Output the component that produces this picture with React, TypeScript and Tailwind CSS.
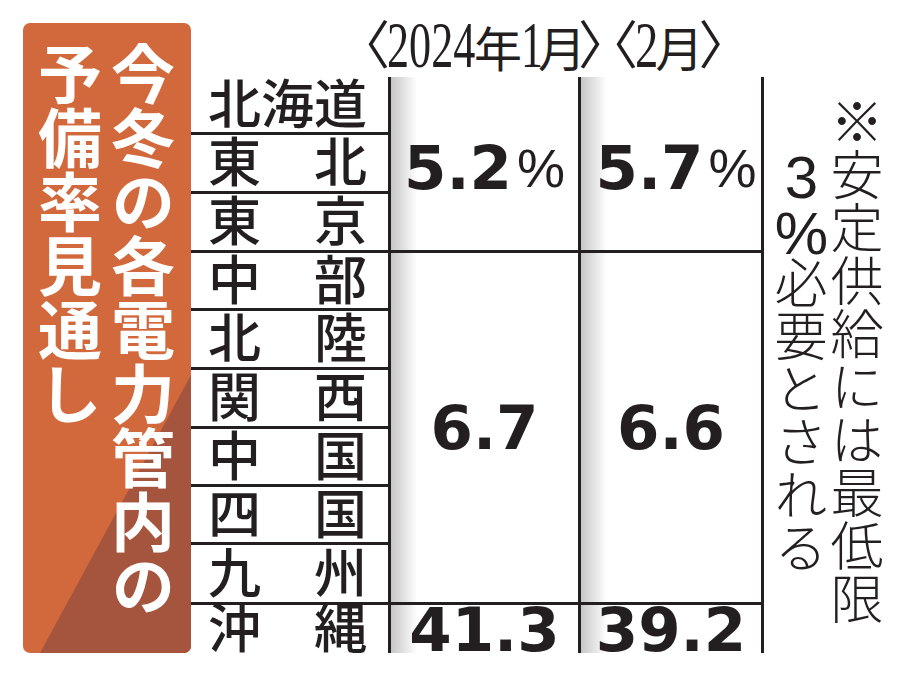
const rows = [
  { a: '北海道', b: '', h: 'h-[55px]' },
  { a: '東', b: '北', h: 'h-[59px] border-t-[3px]' },
  { a: '東', b: '京', h: 'h-[59px] border-t-[3px]' },
  { a: '中', b: '部', h: 'h-[58px] border-t-[3px]' },
  { a: '北', b: '陸', h: 'h-[59px] border-t-[3px]' },
  { a: '関', b: '西', h: 'h-[59px] border-t-[3px]' },
  { a: '中', b: '国', h: 'h-[58px] border-t-[3px]' },
  { a: '四', b: '国', h: 'h-[58px] border-t-[3px]' },
  { a: '九', b: '州', h: 'h-[60px] border-t-[3px]' },
  { a: '沖', b: '縄', h: 'h-[51px] border-t-[3px]' },
]

const shade = 'bg-[linear-gradient(to_right,#c6c6c6,#ffffff_26px)]'
const num = "font-['DejaVu_Sans',sans-serif] font-bold text-[61px] leading-none"
const pct = "font-['Liberation_Sans',sans-serif] font-normal text-[54px] leading-none ml-[5px]"

function TitleBox() {
  return (
    <div className="relative mt-[3px] w-[168px] h-[630px] shrink-0 rounded-[7px] overflow-hidden bg-[#d2693d]">
      <svg className="absolute inset-0" width="168" height="630" viewBox="0 0 168 630">
        <polygon points="168,352 168,630 17,630" fill="#a5543e" />
      </svg>
      <div className="relative ml-[10px] mt-[19px] w-[146px] h-[600px] [writing-mode:vertical-rl] text-[64px] leading-[73px] font-bold text-white">
        今冬の各電力管内の
        <br />
        予備率見通し
      </div>
    </div>
  )
}

function Header() {
  const bracket = "flex justify-center shrink-0 text-[52px] [font-feature-settings:'halt']"
  const kanji = 'flex justify-center shrink-0 text-[48px]'
  const digits = "shrink-0 text-[65px] font-['Liberation_Serif',serif]"
  return (
    <div className="h-[57px]">
      <div className="-mt-[6px] flex items-baseline leading-[62px] pl-[176px] font-normal">
        <span className={`${bracket} w-[20px] -translate-y-[3px]`}>〈</span>
        <span className={`${digits} w-[88px]`}>
          <span className="inline-block origin-left scale-x-[0.68]">2024</span>
        </span>
        <span className={`${kanji} w-[46px]`}>年</span>
        <span className={`${digits} w-[22px]`}>
          <span className="inline-block origin-left scale-x-[0.68]">1</span>
        </span>
        <span className={`${kanji} w-[38px]`}>月</span>
        <span className={`${bracket} w-[20px] -translate-y-[3px]`}>〉</span>
        <span className={`${bracket} w-[20px] ml-[14px] -translate-y-[3px]`}>〈</span>
        <span className={`${digits} w-[25px]`}>
          <span className="inline-block origin-left scale-x-[0.72]">2</span>
        </span>
        <span className={`${kanji} w-[39px]`}>月</span>
        <span className={`${bracket} w-[21px] ml-[2px] -translate-y-[3px]`}>〉</span>
      </div>
    </div>
  )
}

function Table() {
  return (
    <div className="flex h-[576px]">
      <div className="w-[200px] shrink-0 flex flex-col border-r-[3px] border-[#231f20]">
        {rows.map((r, i) => (
          <div key={i} className={`${r.h} border-[#231f20] flex items-center pl-[17px] pb-[7px]`}>
            <div className="w-[159px] flex justify-between text-[53px] leading-none font-medium">
              <span>{r.a}</span>
              {r.b && <span>{r.b}</span>}
            </div>
          </div>
        ))}
      </div>

      <div className={`w-[190px] shrink-0 flex flex-col border-r-[3px] border-[#231f20] ${shade}`}>
        <div className="h-[173px] flex items-center justify-center pt-[8px]">
          <span className={num}>5.2</span>
          <span className={pct}>%</span>
        </div>
        <div className="h-[352px] border-t-[3px] border-[#231f20] flex items-center justify-center">
          <span className={num}>6.7</span>
        </div>
        <div className="h-[51px] border-t-[3px] border-[#231f20] flex items-center justify-center">
          <span className={num}>41.3</span>
        </div>
      </div>

      <div className={`w-[183px] shrink-0 flex flex-col border-r-[3px] border-[#231f20] ${shade}`}>
        <div className="h-[173px] flex items-center justify-center pt-[8px] pl-[10px]">
          <span className={num}>5.7</span>
          <span className={pct}>%</span>
        </div>
        <div className="h-[352px] border-t-[3px] border-[#231f20] flex items-center justify-center">
          <span className={num}>6.6</span>
        </div>
        <div className="h-[51px] border-t-[3px] border-[#231f20] flex items-center justify-center">
          <span className={num}>39.2</span>
        </div>
      </div>
    </div>
  )
}

function Note() {
  const col = '[writing-mode:vertical-rl] [text-orientation:upright] w-[56px] h-[560px] text-[53px] leading-[56px] font-light'
  return (
    <div className="ml-[9px] flex">
      <div className={`${col} mt-[124px]`}>
        <span className="font-['Liberation_Sans',sans-serif] font-normal text-[60px] tracking-[-11px]">3%</span>
        必要とされる
      </div>
      <div className={`${col} mt-[75px]`}>※安定供給には最低限</div>
    </div>
  )
}

export default function App() {
  return (
    <div className="w-[913px] h-[677px] bg-white flex pt-[20px] pl-[23px] overflow-hidden font-['Noto_Sans_CJK_JP',sans-serif] text-[#231f20]">
      <TitleBox />
      <div className="flex flex-col shrink-0">
        <Header />
        <Table />
      </div>
      <Note />
    </div>
  )
}
